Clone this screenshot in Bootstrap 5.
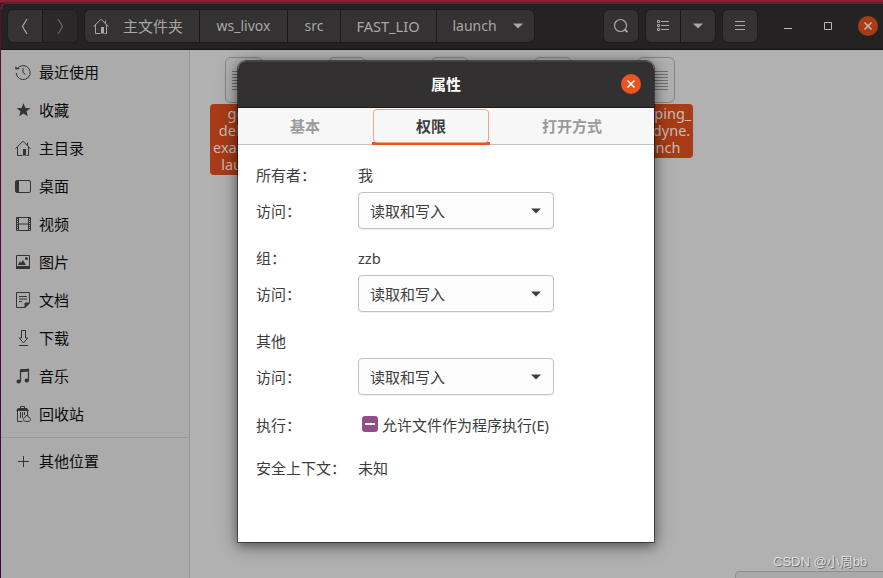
<!DOCTYPE html>
<html lang="zh-CN">
<head>
<meta charset="utf-8">
<meta name="viewport" content="width=device-width, initial-scale=1">
<title>属性</title>
<link href="https://cdn.jsdelivr.net/npm/bootstrap@5.3.0/dist/css/bootstrap.min.css" rel="stylesheet">
<style>
  html, body { height: 578px; overflow: hidden; }
  body { font-family: "Noto Sans", "Noto Sans CJK SC", sans-serif; font-size: 15px; line-height: 20px; color: #3d3d3d; background: #8b2030; }
  svg { display: block; flex: none; }
  .desk { width: 883px; height: 578px; padding: 3px 0 0 1px; background: linear-gradient(#8b2030 0 2px, #551422 3px, #5b1526 50px, #4d0a30 120px, #42073a 578px); }
  .win { border-radius: 7px 0 0 0; background: #b1b1b1; }
  .topbar { height: 47px; background: #242223; border-top: 1px solid #383637; border-bottom: 1px solid #111; padding: 6px 5px 0 7px; color: #a9a8a6; }
  .grp { height: 32px; border-radius: 5px; background: #343233; box-shadow: 0 0 0 1px #1e1c1d; }
  .grp > div { height: 32px; display: flex; align-items: center; justify-content: center; }
  .grp > div + div { border-left: 1px solid #1b191a; }
  .latin { font-size: 14px; }
  .latin-lg { font-size: 14.6px; }
  .b-back { width: 34px; } .b-fwd { width: 35px; background: #2a2829; border-radius: 0 5px 5px 0; color: #6b6a69; }
  .p-home { width: 114px; gap: 14px; padding-right: 8px; } .p-ws { width: 88px; } .p-src { width: 53px; } .p-fast { width: 96px; padding-right: 1px; } .p-launch { width: 98px; padding-left: 4px; }
  .b34 { width: 34px; } .b35 { width: 35px; }
  .wctl { height: 32px; margin-left: 27px; }
  .w-max { margin-left: 31px; } .w-close { margin-left: 26px; }
  .side { width: 189px; background: #ababab; border-right: 1px solid #959595; color: #0b0b0b; padding-top: 3px; }
  .place { height: 38px; padding-left: 14px; gap: 8px; display: flex; align-items: center; }
  .place svg { color: #343434; }
  .rule { height: 1px; background: #999; margin: 4px 0; }
  .files { padding: 7px 0 0 20px; }
  .filecell { width: 68px; margin-right: 35px; }
  .filecell.wide { width: 71px; }
  .sheet { width: 38px; height: 46px; border: 1px solid #858585; border-radius: 6px; margin-left: 15px; padding: 13px 6px 0; }
  .sheet i { display: block; height: 19px; background: repeating-linear-gradient(#707070 0 1px, transparent 1px 3px); }
  .fname { background: #a83c17; color: #c9bcb7; border-radius: 4px; line-height: 17px; padding: 1px 0 2px; margin-top: 1px; text-align: center; font-size: 14.5px; }
  .dlg { position: absolute; left: 238px; top: 61px; width: 416px; height: 481px; background: #fff; border-radius: 8px 8px 0 0; box-shadow: 0 0 0 1px rgba(0,0,0,.48), 0 3px 12px 1px rgba(0,0,0,.45), 0 3px 26px rgba(0,0,0,.2); }
  .dlg-top { height: 47px; background: #323030; border-top: 1px solid #424040; border-bottom: 1px solid #1d1a1b; border-radius: 8px 8px 0 0; color: #fff; font-weight: 700; display: grid; grid-template-columns: 1fr 30px 1fr; align-items: center; }
  .dlg-top > span { padding-bottom: 2px; }
  .dlg-top > svg { margin-right: 13px; margin-top: -1px; }
  .tabs { height: 37px; background: #f7f7f7; border-bottom: 1px solid #c4c2c0; color: #9a9a9a; font-weight: 700; }
  .tabs > div { height: 37px; display: flex; align-items: center; justify-content: center; padding-bottom: 1px; }
  .t1 { width: 134px; } .t2 { width: 118px; color: #3d3d3d; border-bottom: 3px solid #e95420; } .t3 { width: 164px; }
  .t2 span { width: 116px; height: 34px; margin-top: 2px; border: 1px solid #f0a388; border-radius: 4px; display: flex; align-items: center; justify-content: center; }
  .form-area { padding: 20px 18px 0; }
  .line { display: grid; grid-template-columns: 102px 1fr; align-items: center; height: 20px; }
  .line.tall { height: 37px; }
  .pick { width: 196px; height: 37px; border: 1px solid #c3c1bf; border-radius: 4px; background: #fcfcfc; padding: 1px 12px 0 11px; box-shadow: 0 1px 1px rgba(0,0,0,.06); }
  .tick { width: 16px; height: 16px; border-radius: 3px; background: #924d8b; margin: -2px 4px 0 4px; padding: 7px 3px 0; }
  .tick i { display: block; height: 2px; background: #fff; }
  .mt-a { margin-top: 7px; } .mt-b { margin-top: 19px; } .mt-c { margin-top: 20px; } .mt-d { margin-top: 23px; }
  .status { position: absolute; left: 735px; top: 571px; width: 155px; height: 12px; border: 1px solid #8e8e8e; border-radius: 4px 0 0 0; background: #a9a9a9; }
  .wmark { position: absolute; left: 773px; top: 552px; font: 13px/20px "Liberation Sans", "Noto Sans CJK SC", sans-serif; color: #dedede; text-shadow: 1px 1px 0 #707070; white-space: nowrap; }
</style>
<script src="https://cdn.jsdelivr.net/npm/bootstrap@5.3.0/dist/js/bootstrap.bundle.min.js"></script>
</head>
<body>
<div class="desk position-relative">
  <div class="win h-100 d-flex flex-column overflow-hidden">
    <header class="topbar d-flex align-items-start flex-shrink-0">
      <div class="grp d-flex">
        <div class="b-back"><svg width="16" height="16" fill="none" stroke="currentColor" stroke-width="1.2"><path d="M10 1 5.500 8.500 10 16"/></svg></div>
        <div class="b-fwd"><svg width="16" height="16" fill="none" stroke="currentColor" stroke-width="1.2"><path d="M6 1 10.500 8.500 6 16"/></svg></div>
      </div>
      <div class="grp d-flex ms-2">
        <div class="p-home"><svg width="16" height="16" fill="none" stroke="currentColor"><path d="M.5 8.700 8 1.200l7.500 7.500M2.500 7v8.500h5M13.500 7v8.500h-2M12.500 2.500v3"/><path d="M8 9h3v6.500H8z" fill="currentColor" stroke="none"/></svg><span>主文件夹</span></div>
        <div class="p-ws latin">ws_livox</div>
        <div class="p-src latin">src</div>
        <div class="p-fast latin-lg">FAST_LIO</div>
        <div class="p-launch latin"><span class="me-3">launch</span><svg width="10" height="6"><path d="M0 .5h10L5 5.500z" fill="currentColor"/></svg></div>
      </div>
      <div class="grp d-flex ms-auto"><div class="b34"><svg width="16" height="16" fill="none" stroke="currentColor" stroke-width="1.200"><circle cx="7.500" cy="7.500" r="6"/><path d="m11.500 11.500 3 2.500" stroke-width="2"/></svg></div></div>
      <div class="grp d-flex ms-2">
        <div class="b34"><svg width="14" height="12" fill="none" stroke="currentColor"><path d="M1.500 .5h2v2h-2zM1.500 4.500h2v2h-2zM1.500 8.500h2v2h-2zM5 1.500h8M5 5.500h8M5 9.500h8"/></svg></div>
        <div class="b35"><svg width="10" height="6"><path d="M0 .5h10L5 5.500z" fill="currentColor"/></svg></div>
      </div>
      <div class="grp d-flex ms-2"><div class="b34"><svg width="10" height="10" stroke="currentColor"><path d="M0 .5h10M0 4.500h10M0 8.500h10"/></svg></div></div>
      <div class="wctl d-flex align-items-center">
        <svg width="8" height="10"><path d="M0 7h8v1H0z" fill="#bbb"/></svg>
        <svg class="w-max" width="9" height="8" fill="none" stroke="#b9b9b9"><path d="M1.500.5h7v7h-7z"/></svg>
        <svg class="w-close" width="20" height="20"><circle cx="10" cy="10" r="10" fill="#a83c17"/><path d="m6.500 6.500 7 7m0-7-7 7" stroke="#c9bcb7" stroke-width="1.500"/></svg>
      </div>
    </header>
    <div class="d-flex flex-grow-1">
      <nav class="side flex-shrink-0">
        <div class="place"><svg width="16" height="16" fill="none" stroke="currentColor"><path d="M2.500 4.500A7 7 0 1 1 1.200 9M8 4v4.500l2.500 2"/><path d="M0 2.500 5 5l-4.500.5z" fill="currentColor" stroke="none"/></svg><span>最近使用</span></div>
        <div class="place"><svg width="16" height="16"><path d="m8.500 1.200 1.900 4.700 5 .3-3.900 3.100 1.300 4.900-4.300-2.700-4.300 2.700 1.300-4.900-3.900-3.100 5-.3z" fill="currentColor"/></svg><span>收藏</span></div>
        <div class="place"><svg width="16" height="16" fill="none" stroke="currentColor"><path d="M.5 8.700 8 1.200l7.500 7.500M2.500 7v8.500h5M13.500 7v8.500h-2M12.500 2.500v3"/><path d="M8 9h3v6.500H8z" fill="currentColor" stroke="none"/></svg><span>主目录</span></div>
        <div class="place"><svg width="16" height="16" fill="none" stroke="currentColor"><rect x=".5" y="2.500" width="15" height="12" rx="1.500"/><path d="M1 3h3v11H1z" fill="currentColor" stroke="none"/></svg><span>桌面</span></div>
        <div class="place"><svg width="16" height="16" fill="none" stroke="currentColor"><path d="M1.500 1.500h14v13h-14zM3.500 1v14M13.500 1v14M3.500 8h10"/><path d="M2.500 2v12M14.500 2v12" stroke-dasharray="1 1"/></svg><span>视频</span></div>
        <div class="place"><svg width="16" height="16" fill="none" stroke="currentColor"><path d="M1.500 1.500h13v13h-13z"/><path d="M1 12h14v3H1zM3 11l2-4 1 2 2-3 3 5z" fill="currentColor" stroke="none"/><circle cx="11.500" cy="4.500" r="1.500" fill="currentColor" stroke="none"/></svg><span>图片</span></div>
        <div class="place"><svg width="16" height="16" fill="none" stroke="currentColor"><path d="M1.500.5h13v10l-4.500 5H1.500zM4 4.500h8M4 7h8M4 9.500h3"/><path d="M10 15.500V11h4.500z" fill="currentColor"/></svg><span>文档</span></div>
        <div class="place"><svg width="16" height="16" fill="none" stroke="currentColor"><path d="M6.500.5h4V8h2.200l-4.200 5-4.200-5h2.200zM4 15.500h9"/></svg><span>下载</span></div>
        <div class="place"><svg width="16" height="16" fill="none" stroke="currentColor"><path d="M5.500 13V2L13.500 1.500V12" stroke-width="1.200"/><path d="M5 1.500 14 .8v2.700l-9 .7z" fill="currentColor" stroke="none"/><ellipse cx="3.700" cy="13.500" rx="2.200" ry="2" fill="currentColor" stroke="none"/><ellipse cx="11.800" cy="12.500" rx="2.200" ry="2" fill="currentColor" stroke="none"/></svg><span>音乐</span></div>
        <div class="place"><svg width="16" height="16" viewBox="1 0 16 16" fill="none" stroke="currentColor"><path d="M6.500 2V.5h4V2M3.500 5v10.500h5M6.500 6v6M8.500 6v6M10.500 6v3M13.500 5v4"/><path d="M4 2h9l2 3H2z" fill="currentColor" stroke="none"/><path d="M9.500 13.500c0-1.500 1-2.500 2-2.500l.5-1.500h2V11c1.500.5 2.500 1.200 2.500 2.500s-1 2-3.500 2-3.500-.5-3.500-2z"/></svg><span>回收站</span></div>
        <div class="rule"></div>
        <div class="place"><svg width="16" height="16" stroke="currentColor"><path d="M3 8.500h11M8.500 3v11"/></svg><span>其他位置</span></div>
      </nav>
      <main class="files d-flex flex-grow-1 align-items-start">
        <div class="filecell flex-shrink-0"><div class="sheet"><i></i></div><div class="fname">gdb_<br>debug_<br>example.<br>launch</div></div>
        <div class="filecell flex-shrink-0"><div class="sheet"><i></i></div></div>
        <div class="filecell flex-shrink-0"><div class="sheet"><i></i></div></div>
        <div class="filecell flex-shrink-0"><div class="sheet"><i></i></div></div>
        <div class="filecell wide flex-shrink-0 me-0"><div class="sheet"><i></i></div><div class="fname">mapping_<br>velodyne.<br>launch</div></div>
      </main>
    </div>
  </div>
  <div class="status"></div>
  <section class="dlg">
    <div class="dlg-top"><span></span><span>属性</span><svg class="ms-auto" width="20" height="20"><circle cx="10" cy="10" r="10" fill="#e95420"/><path d="m6.500 6.500 7 7m0-7-7 7" stroke="#fff" stroke-width="1.500"/></svg></div>
    <div class="tabs d-flex"><div class="t1">基本</div><div class="t2 p-0"><span>权限</span></div><div class="t3">打开方式</div></div>
    <div class="form-area">
      <div class="line"><span>所有者：</span><span>我</span></div>
      <div class="line tall mt-a"><span>访问：</span><div class="pick d-flex align-items-center justify-content-between"><span>读取和写入</span><svg width="10" height="6"><path d="M0 .5h10L5 5.500z" fill="#3d3d3d"/></svg></div></div>
      <div class="line mt-b"><span>组：</span><span class="latin-lg">zzb</span></div>
      <div class="line tall mt-a"><span>访问：</span><div class="pick d-flex align-items-center justify-content-between"><span>读取和写入</span><svg width="10" height="6"><path d="M0 .5h10L5 5.500z" fill="#3d3d3d"/></svg></div></div>
      <div class="line mt-b"><span>其他</span></div>
      <div class="line tall mt-a"><span>访问：</span><div class="pick d-flex align-items-center justify-content-between"><span>读取和写入</span><svg width="10" height="6"><path d="M0 .5h10L5 5.500z" fill="#3d3d3d"/></svg></div></div>
      <div class="line mt-c"><span>执行：</span><div class="d-flex align-items-center"><div class="tick"><i></i></div><span class="text-nowrap">允许文件作为程序执行<span class="latin-lg">(E)</span></span></div></div>
      <div class="line mt-d"><span class="text-nowrap">安全上下文：</span><span>未知</span></div>
    </div>
  </section>
  <div class="wmark">CSDN @小周bb</div>
</div>
</body>
</html>
